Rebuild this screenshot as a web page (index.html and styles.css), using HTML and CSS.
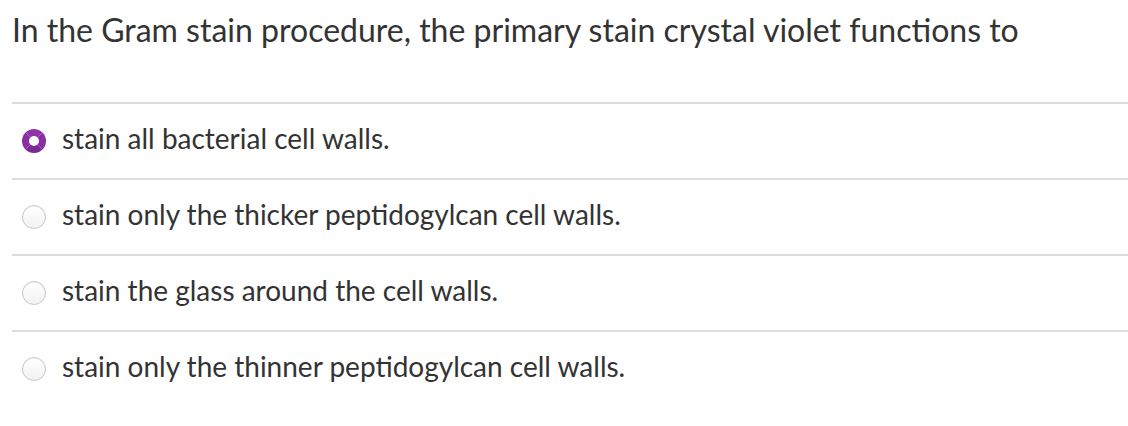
FILE: index.html
```html
<!DOCTYPE html>
<html>
<head>
<meta charset="utf-8">
<link rel="stylesheet" href="styles.css">
</head>
<body>
<div class="question">
  <div class="prompt">In the Gram stain procedure, the primary stain crystal violet functions to</div>
  <div class="answers">
    <div class="answer"><span class="radio selected"></span><span class="label">stain all bacterial cell walls.</span></div>
    <div class="answer"><span class="radio"></span><span class="label">stain only the thicker peptidogylcan cell walls.</span></div>
    <div class="answer"><span class="radio"></span><span class="label">stain the glass around the cell walls.</span></div>
    <div class="answer"><span class="radio"></span><span class="label">stain only the thinner peptidogylcan cell walls.</span></div>
  </div>
</div>
</body>
</html>
```
FILE: styles.css
```css
html, body {
  margin: 0;
  padding: 0;
  background: #fff;
}
body {
  font-family: Lato, "Open Sans", sans-serif;
  color: #333333;
}
.question {
  padding-left: 12px;
}
.prompt {
  font-size: 32px;
  line-height: 40px;
  padding-top: 10px;
  height: 102px;
  box-sizing: border-box;
}
.answers {
  border-top: 2px solid #dcdcdc;
}
.answer {
  display: flex;
  align-items: center;
  height: 74px;
  border-bottom: 2px solid #dcdcdc;
}
.answer:last-child {
  border-bottom: none;
}
.radio {
  box-sizing: border-box;
  width: 24px;
  height: 24px;
  border-radius: 50%;
  border: 1px solid #c8c8c8;
  background: linear-gradient(#ffffff, #f2f2f2);
  box-shadow: inset 0 1px 1px rgba(0,0,0,0.06);
  margin-left: 10px;
  margin-right: 16px;
  flex: none;
}
.radio.selected {
  border: 7.5px solid #8a2ea3;
  border-color: #9134aa #8a2ea3 #7c2895;
  background: #fff;
  box-shadow: none;
}
.label {
  font-size: 28px;
  line-height: 34px;
  padding-bottom: 6px;
}
```
